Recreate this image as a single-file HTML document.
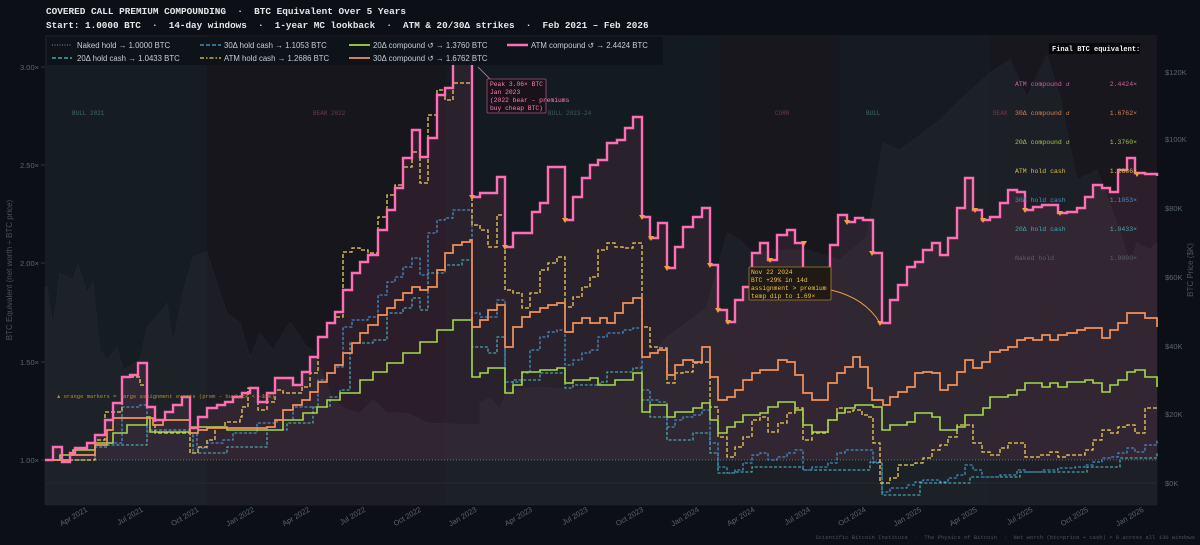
<!DOCTYPE html>
<html><head><meta charset="utf-8">
<style>
html,body{margin:0;padding:0;background:#0c1016;width:1200px;height:545px;overflow:hidden}
svg{display:block}
.m{font-family:"Liberation Mono",monospace}
.s{font-family:"Liberation Sans","DejaVu Sans",sans-serif}
</style></head><body>
<svg width="1200" height="545" viewBox="0 0 1200 545" xmlns="http://www.w3.org/2000/svg">
<rect width="1200" height="545" fill="#0c1016"/>
<text x="46" y="14" class="m" font-size="9.4" font-weight="bold" fill="#e6e6e6" xml:space="preserve">COVERED CALL PREMIUM COMPOUNDING  ·  BTC Equivalent Over 5 Years</text>
<text x="46" y="28" class="m" font-size="9.3" font-weight="bold" fill="#e6e6e6" xml:space="preserve">Start: 1.0000 BTC  ·  14-day windows  ·  1-year MC lookback  ·  ATM &amp; 20/30Δ strikes  ·  Feb 2021 – Feb 2026</text>
<rect x="45" y="35" width="1112" height="470" fill="#151a21"/>
<rect x="45" y="35" width="162" height="470" fill="#161d22"/>
<rect x="207" y="35" width="238" height="470" fill="#17161d"/>
<rect x="445" y="35" width="275" height="470" fill="#141b20"/>
<rect x="720" y="35" width="120" height="470" fill="#18171e"/>
<rect x="840" y="35" width="150" height="470" fill="#151b21"/>
<rect x="990" y="35" width="167" height="470" fill="#18171e"/>
<path d="M45 505 L45 287 L47 287 L53 327 L60 273 L73 280 L78 265 L87 293 L93 283 L100 350 L107 360 L117 347 L123 370 L140 360 L147 327 L160 313 L167 303 L173 343 L183 293 L193 257 L207 252 L220 293 L227 313 L240 323 L250 357 L260 333 L273 350 L290 322 L307 347 L313 350 L333 400 L347 410 L360 413 L373 400 L387 413 L407 413 L427 423 L480 425 L480 403 L490 398 L500 410 L507 390 L540 387 L573 390 L607 385 L633 382 L640 360 L653 353 L667 337 L687 323 L707 307 L727 233 L740 240 L753 253 L773 250 L807 250 L840 260 L867 237 L877 177 L883 143 L900 150 L940 120 L960 100 L990 73 L1010 60 L1027 97 L1047 55 L1060 97 L1077 180 L1097 170 L1117 223 L1130 263 L1137 243 L1150 250 L1157 243 L1157 505 Z" fill="#262b32" opacity="0.4" stroke="#2e333b" stroke-width="0.8"/>
<path d="M45 460 H53 V447 H62 V462 H70 V453 H75 V448 H87 V443 H95 V435 H105 V420 H113 V403 H122 V377 H130 V375 H138 V363 H147 V407 H155 V420 H165 V412 H173 V405 H182 V397 H190 V428 H198 V417 H207 V408 H217 V405 H225 V402 H233 V397 H242 V393 H250 V388 H258 V402 H267 V393 H275 V378 H293 V385 H302 V372 H310 V357 H318 V337 H327 V323 H335 V312 H343 V290 H352 V273 H360 V262 H368 V255 H378 V230 H387 V210 H395 V188 H403 V158 H412 V130 H420 V157 H428 V138 H437 V95 H445 V88 H453 V60 H462 V55 H472 V197 H480 V193 H497 V177 H505 V247 H513 V233 H532 V212 H540 V203 H548 V167 H557 V167 H565 V220 H573 V197 H582 V178 H590 V165 H598 V160 H607 V143 H617 V140 H625 V128 H633 V117 H642 V217 H650 V238 H658 V223 H667 V268 H675 V247 H683 V227 H693 V217 H702 V208 H710 V265 H718 V310 H727 V322 H735 V300 H743 V287 H752 V253 H760 V243 H768 V260 H777 V235 H787 V230 H795 V243 H803 V287 H820 V277 H830 V245 H838 V215 H847 V222 H855 V218 H863 V220 H873 V253 H882 V323 H890 V300 H898 V285 H907 V267 H915 V262 H923 V250 H932 V243 H940 V255 H948 V238 H957 V208 H965 V178 H973 V210 H982 V220 H990 V217 H1000 V203 H1008 V190 H1017 V192 H1025 V210 H1033 V207 H1042 V205 H1050 V205 H1058 V213 H1067 V212 H1077 V208 H1085 V197 H1093 V185 H1102 V188 H1110 V192 H1118 V170 H1127 V158 H1135 V173 H1145 V174 H1157 V176 V460 H45 Z" fill="#ff6eb4" opacity="0.09"/>
<line x1="45" y1="460" x2="1157" y2="460" stroke="#7a8290" stroke-width="0.8" stroke-dasharray="1,2"/>
<line x1="45" y1="483" x2="1157" y2="483" stroke="#2a2f38" stroke-width="0.8"/>
<g class="m" font-size="6">
<text x="72" y="115" fill="#3f6a62">BULL 2021</text>
<text x="313" y="115" fill="#6a3a48">BEAR 2022</text>
<text x="548" y="115" fill="#3f5a58">BULL 2023-24</text>
<text x="775" y="115" fill="#6a3a48">CORR</text>
<text x="866" y="115" fill="#3f6a62">BULL</text>
<text x="993" y="115" fill="#6a3a48">BEAR</text>
</g>
<g fill="none" stroke-linejoin="miter">
<path stroke="#4fc1c9" stroke-width="1.1" stroke-dasharray="3,1.8" d="M45 460 H95 V447 H107 V445 H147 V430 H190 V435 H193 V453 H227 V447 H267 V430 H287 V423 H313 V407 H330 V397 H340 V390 H350 V343 H373 V340 H387 V313 H403 V308 H412 V298 H420 V310 H428 V273 H445 V265 H462 V260 H472 V262 V347 H488 V353 H497 V337 H505 V393 H513 V380 H540 V373 H565 V388 H573 V385 H600 V382 H607 V372 H633 V368 H642 V400 H650 V417 H667 V440 H693 V433 H710 V453 H718 V473 H735 V472 H752 V467 H803 V470 H870 V462 H882 V495 H920 V483 H970 V477 H1020 V472 H1087 V467 H1120 V458 H1157 V452"/>
<path stroke="#4aa3e6" stroke-width="1.1" stroke-dasharray="3,1.8" d="M45 460 H95 V445 H107 V443 H122 V407 H140 V405 H147 V432 H190 V433 H197 V448 H207 V443 H223 V440 H233 V433 H257 V423 H277 V420 H293 V407 H318 V380 H327 V373 H335 V367 H343 V327 H352 V320 H368 V317 H378 V295 H387 V282 H395 V277 H403 V267 H412 V258 H420 V275 H428 V233 H437 V220 H445 V218 H453 V210 H472 V313 H480 V317 H497 V300 H505 V382 H522 V373 H530 V350 H540 V337 H548 V332 H557 V330 H565 V365 H573 V360 H582 V353 H590 V350 H598 V337 H607 V333 H623 V330 H633 V328 H642 V390 H650 V400 H658 V402 H667 V427 H675 V420 H683 V417 H693 V415 H702 V410 H710 V443 H718 V467 H727 V473 H735 V470 H743 V463 H752 V455 H760 V453 H768 V460 H777 V457 H787 V453 H795 V450 H803 V470 H812 V467 H828 V463 H837 V453 H845 V450 H873 V463 H882 V492 H890 V488 H907 V485 H915 V482 H923 V480 H940 V482 H948 V478 H957 V475 H965 V465 H973 V470 H982 V477 H1000 V475 H1017 V470 H1025 V472 H1042 V470 H1058 V468 H1075 V467 H1085 V465 H1093 V462 H1102 V458 H1110 V457 H1118 V453 H1127 V448 H1135 V452 H1145 V445 H1157 V440"/>
<path stroke="#f2cc5a" stroke-width="1.3" stroke-dasharray="4,2" d="M45 460 H95 V440 H105 V412 H122 V377 H140 V385 H147 V407 H155 V433 H190 V453 H198 V447 H207 V440 H215 V427 H225 V422 H240 V417 H242 V407 H248 V388 H258 V410 H267 V402 H275 V390 H283 V393 H302 V387 H310 V373 H318 V337 H327 V323 H335 V317 H343 V252 H352 V248 H360 V250 H368 V253 H378 V217 H387 V195 H395 V185 H403 V167 H412 V152 H420 V183 H428 V115 H437 V90 H445 V100 H453 V83 H472 V85 V225 H480 V230 H488 V247 H497 V215 H505 V290 H513 V293 H522 V308 H530 V293 H540 V270 H548 V263 H557 V257 H565 V307 H573 V297 H582 V287 H590 V277 H598 V250 H607 V243 H615 V247 H623 V248 H633 V243 H642 V327 H650 V347 H658 V348 H667 V383 H675 V373 H683 V372 H693 V363 H702 V362 H710 V407 H718 V437 H727 V457 H735 V447 H743 V437 H752 V420 H760 V417 H768 V432 H778 V423 H787 V413 H795 V408 H803 V440 H812 V433 H828 V420 H837 V408 H845 V412 H853 V410 H862 V415 H868 V417 H873 V443 H880 V483 H890 V478 H898 V465 H915 V463 H923 V458 H932 V450 H940 V445 H948 V437 H957 V425 H965 V425 H973 V443 H982 V452 H990 V455 H1000 V448 H1008 V443 H1025 V457 H1040 V455 H1050 V452 H1058 V457 H1067 V455 H1085 V450 H1093 V440 H1102 V430 H1110 V433 H1118 V427 H1127 V425 H1135 V433 H1145 V408 H1157 V408"/>
<path stroke="#a6d94a" stroke-width="1.6" d="M45 460 H60 V455 H73 V450 H95 V443 H113 V433 H127 V425 H147 V417 H150 V432 H190 V427 H227 V430 H270 V430 H283 V420 H303 V413 H317 V407 H327 V400 H340 V393 H360 V380 H373 V372 H387 V363 H403 V353 H420 V342 H437 V330 H453 V320 H472 V317 V377 H480 V373 H488 V368 H505 V393 H513 V385 H522 V372 H540 V370 H557 V368 H565 V383 H573 V380 H590 V378 H598 V385 H615 V380 H633 V373 H642 V412 H650 V405 H667 V417 H675 V412 H693 V408 H702 V403 H710 V420 H718 V433 H727 V427 H735 V422 H743 V415 H760 V413 H768 V407 H778 V402 H795 V410 H803 V425 H812 V432 H828 V420 H837 V413 H845 V408 H855 V405 H873 V407 H882 V430 H890 V425 H907 V422 H915 V413 H932 V417 H940 V430 H957 V427 H965 V415 H983 V408 H990 V397 H1008 V395 H1017 V390 H1025 V383 H1042 V387 H1050 V383 H1058 V387 H1067 V382 H1085 V380 H1093 V383 H1102 V392 H1110 V385 H1118 V380 H1127 V372 H1135 V370 H1145 V377 H1157 V387"/>
<path stroke="#f4925a" stroke-width="1.7" d="M45 460 H70 V455 H95 V445 H107 V430 H113 V418 H147 V418 H153 V425 H163 V420 H190 V433 H198 V430 H207 V428 H267 V427 H275 V420 H283 V410 H293 V405 H302 V400 H310 V392 H318 V382 H327 V373 H335 V365 H343 V353 H352 V343 H360 V333 H368 V325 H378 V315 H387 V308 H395 V300 H403 V293 H412 V287 H420 V290 H428 V287 H437 V270 H445 V253 H453 V245 H462 V242 H470 V240 H472 V327 H480 V320 H488 V310 H497 V305 H505 V347 H513 V327 H522 V317 H530 V312 H540 V308 H548 V305 H557 V303 H565 V332 H573 V323 H582 V318 H590 V323 H600 V318 H607 V323 H615 V313 H623 V303 H633 V298 H642 V357 H650 V353 H658 V350 H667 V375 H675 V365 H683 V360 H693 V362 H702 V347 H710 V377 H718 V400 H727 V397 H735 V390 H743 V380 H752 V373 H760 V370 H778 V360 H787 V362 H795 V375 H803 V393 H812 V400 H828 V383 H837 V373 H845 V367 H853 V357 H860 V367 H868 V388 H872 V400 H883 V405 H890 V397 H898 V392 H907 V387 H915 V373 H923 V372 H932 V373 H940 V390 H948 V385 H957 V372 H965 V360 H973 V368 H982 V362 H990 V352 H1000 V350 H1008 V347 H1017 V340 H1025 V338 H1033 V340 H1042 V335 H1050 V340 H1058 V335 H1067 V333 H1077 V330 H1085 V328 H1093 V328 H1102 V338 H1110 V330 H1118 V323 H1127 V313 H1135 V313 H1145 V318 H1157 V327"/>
<path stroke="#ff6eb4" stroke-width="2.4" d="M45 460 H53 V447 H62 V462 H70 V453 H75 V448 H87 V443 H95 V435 H105 V420 H113 V403 H122 V377 H130 V375 H138 V363 H147 V407 H155 V420 H165 V412 H173 V405 H182 V397 H190 V428 H198 V417 H207 V408 H217 V405 H225 V402 H233 V397 H242 V393 H250 V388 H258 V402 H267 V393 H275 V378 H293 V385 H302 V372 H310 V357 H318 V337 H327 V323 H335 V312 H343 V290 H352 V273 H360 V262 H368 V255 H378 V230 H387 V210 H395 V188 H403 V158 H412 V130 H420 V157 H428 V138 H437 V95 H445 V88 H453 V60 H462 V55 H472 V197 H480 V193 H497 V177 H505 V247 H513 V233 H532 V212 H540 V203 H548 V167 H557 V167 H565 V220 H573 V197 H582 V178 H590 V165 H598 V160 H607 V143 H617 V140 H625 V128 H633 V117 H642 V217 H650 V238 H658 V223 H667 V268 H675 V247 H683 V227 H693 V217 H702 V208 H710 V265 H718 V310 H727 V322 H735 V300 H743 V287 H752 V253 H760 V243 H768 V260 H777 V235 H787 V230 H795 V243 H803 V287 H820 V277 H830 V245 H838 V215 H847 V222 H855 V218 H863 V220 H873 V253 H882 V323 H890 V300 H898 V285 H907 V267 H915 V262 H923 V250 H932 V243 H940 V255 H948 V238 H957 V208 H965 V178 H973 V210 H982 V220 H990 V217 H1000 V203 H1008 V190 H1017 V192 H1025 V210 H1033 V207 H1042 V205 H1050 V205 H1058 V213 H1067 V212 H1077 V208 H1085 V197 H1093 V185 H1102 V188 H1110 V192 H1118 V170 H1127 V158 H1135 V173 H1145 V174 H1157 V176"/>
</g>
<g fill="#f0a040">
<path d="M469 195h6l-3 5z"/><path d="M502 245h6l-3 5z"/><path d="M562 218h6l-3 5z"/><path d="M639 215h6l-3 5z"/><path d="M648 236h6l-3 5z"/><path d="M664 266h6l-3 5z"/><path d="M707 263h6l-3 5z"/><path d="M715 308h6l-3 5z"/><path d="M725 320h6l-3 5z"/><path d="M767 258h6l-3 5z"/><path d="M801 241h6l-3 5z"/><path d="M844 220h6l-3 5z"/><path d="M869 251h6l-3 5z"/><path d="M877 321h6l-3 5z"/><path d="M972 208h6l-3 5z"/><path d="M980 218h6l-3 5z"/><path d="M1022 208h6l-3 5z"/><path d="M1057 211h6l-3 5z"/><path d="M1134 172h6l-3 5z"/>
</g>
<path d="M478 67 L491 80" stroke="#ff6eb4" stroke-width="0.8"/>
<rect x="487" y="79" width="59" height="34" fill="#1a1119" stroke="#a8507e" stroke-width="0.8" rx="1"/>
<g class="m" font-size="6.3" fill="#ff7fbf"><text x="490" y="86">Peak  3.06× BTC</text><text x="490" y="94">Jan 2023</text><text x="490" y="102">(2022 bear – premiums</text><text x="490" y="110">buy cheap BTC)</text></g>
<path d="M831 290 Q865 298 880 323" stroke="#f0a040" stroke-width="0.9" fill="none"/>
<rect x="749" y="267" width="82" height="33" fill="#1f1a14" stroke="#a8802e" stroke-width="0.8" rx="1"/>
<g class="m" font-size="6.3" fill="#f2c14e"><text x="751" y="274">Nov 22 2024</text><text x="751" y="282">BTC +29% in 14d</text><text x="751" y="290">assignment &gt; premium</text><text x="751" y="298">temp dip to 1.69×</text></g>
<text x="57" y="398" class="m" font-size="5.5" fill="#b98a2e">▲ orange markers = large assignment events (prem – buyback &lt; −$5K)</text>
<rect x="47" y="37" width="616" height="28" fill="#0e1319" opacity="0.95" rx="1"/>
<g class="s" font-size="7.8" fill="#c9ccd2" xml:space="preserve">
<line x1="52" y1="45" x2="72" y2="45" stroke="#8a929e" stroke-dasharray="1,1.5"/><text x="77" y="48">Naked hold  →  1.0000 BTC</text>
<line x1="200" y1="45" x2="221" y2="45" stroke="#4aa3e6" stroke-width="1.3" stroke-dasharray="4,2"/><text x="224" y="48">30Δ  hold cash  →  1.1053 BTC</text>
<line x1="349" y1="45" x2="370" y2="45" stroke="#a6d94a" stroke-width="1.8"/><text x="373" y="48">20Δ  compound ↺  →  1.3760 BTC</text>
<line x1="507" y1="45" x2="528" y2="45" stroke="#ff6eb4" stroke-width="2.6"/><text x="531" y="48">ATM  compound ↺  →  2.4424 BTC</text>
<line x1="52" y1="58" x2="72" y2="58" stroke="#4fc1c9" stroke-width="1.3" stroke-dasharray="4,2"/><text x="77" y="61">20Δ  hold cash  →  1.0433 BTC</text>
<line x1="200" y1="58" x2="221" y2="58" stroke="#f2cc5a" stroke-width="1.3" stroke-dasharray="4,2,1.5,2"/><text x="224" y="61">ATM  hold cash  →  1.2686 BTC</text>
<line x1="349" y1="58" x2="370" y2="58" stroke="#f4925a" stroke-width="1.8"/><text x="373" y="61">30Δ  compound ↺  →  1.6762 BTC</text>
</g>
<rect x="1049" y="43" width="91" height="11" fill="#05070a"/>
<text x="1052" y="51" class="m" font-size="7" font-weight="bold" fill="#f0f0f0">Final BTC equivalent:</text>
<g class="m" font-size="6.5" xml:space="preserve">
<text x="1015" y="86" fill="#d0609a">ATM  compound ↺</text><text x="1137" y="86" text-anchor="end" fill="#d0609a">2.4424×</text>
<text x="1015" y="115" fill="#d98050">30Δ  compound ↺</text><text x="1137" y="115" text-anchor="end" fill="#d98050">1.6762×</text>
<text x="1015" y="144" fill="#a0c24a">20Δ  compound ↺</text><text x="1137" y="144" text-anchor="end" fill="#a0c24a">1.3760×</text>
<text x="1015" y="173" fill="#d8bb52">ATM  hold cash</text><text x="1137" y="173" text-anchor="end" fill="#d8bb52">1.2686×</text>
<text x="1015" y="202" fill="#4a8ec8">30Δ  hold cash</text><text x="1137" y="202" text-anchor="end" fill="#4a8ec8">1.1053×</text>
<text x="1015" y="231" fill="#44a8b0">20Δ  hold cash</text><text x="1137" y="231" text-anchor="end" fill="#44a8b0">1.0433×</text>
<text x="1015" y="260" fill="#5a606a">Naked hold</text><text x="1137" y="260" text-anchor="end" fill="#5a606a">1.0000×</text>
</g>
<g class="s" font-size="7.5" fill="#5c6470" text-anchor="end">
<text x="39" y="70">3.00×</text><text x="39" y="168">2.50×</text><text x="39" y="266">2.00×</text><text x="39" y="365">1.50×</text><text x="39" y="463">1.00×</text>
</g>
<g stroke="#3a404a" stroke-width="0.8"><line x1="41" y1="67" x2="45" y2="67"/><line x1="41" y1="165" x2="45" y2="165"/><line x1="41" y1="263" x2="45" y2="263"/><line x1="41" y1="362" x2="45" y2="362"/><line x1="41" y1="460" x2="45" y2="460"/></g>
<g class="s" font-size="7.5" fill="#5c6470">
<text x="1165" y="75">$120K</text><text x="1165" y="142">$100K</text><text x="1165" y="211">$80K</text><text x="1165" y="280">$60K</text><text x="1165" y="349">$40K</text><text x="1165" y="417">$20K</text><text x="1165" y="486">$0K</text>
</g>
<text transform="translate(12,270) rotate(-90)" text-anchor="middle" class="s" font-size="8" fill="#4a515c">BTC Equivalent  (net worth ÷ BTC price)</text>
<text transform="translate(1193,270) rotate(-90)" text-anchor="middle" class="s" font-size="8" fill="#4a515c">BTC Price ($K)</text>
<g class="s" font-size="7.5" fill="#5c6470" text-anchor="end">
<text transform="translate(88,511) rotate(-30)">Apr 2021</text>
<text transform="translate(143.6,511) rotate(-30)">Jul 2021</text>
<text transform="translate(199.2,511) rotate(-30)">Oct 2021</text>
<text transform="translate(254.8,511) rotate(-30)">Jan 2022</text>
<text transform="translate(310.4,511) rotate(-30)">Apr 2022</text>
<text transform="translate(366,511) rotate(-30)">Jul 2022</text>
<text transform="translate(421.6,511) rotate(-30)">Oct 2022</text>
<text transform="translate(477.2,511) rotate(-30)">Jan 2023</text>
<text transform="translate(532.8,511) rotate(-30)">Apr 2023</text>
<text transform="translate(588.4,511) rotate(-30)">Jul 2023</text>
<text transform="translate(644,511) rotate(-30)">Oct 2023</text>
<text transform="translate(699.6,511) rotate(-30)">Jan 2024</text>
<text transform="translate(755.2,511) rotate(-30)">Apr 2024</text>
<text transform="translate(810.8,511) rotate(-30)">Jul 2024</text>
<text transform="translate(866.4,511) rotate(-30)">Oct 2024</text>
<text transform="translate(922,511) rotate(-30)">Jan 2025</text>
<text transform="translate(977.6,511) rotate(-30)">Apr 2025</text>
<text transform="translate(1033.2,511) rotate(-30)">Jul 2025</text>
<text transform="translate(1088.8,511) rotate(-30)">Oct 2025</text>
<text transform="translate(1144.4,511) rotate(-30)">Jan 2026</text>
</g>
<text x="1195" y="539" text-anchor="end" class="m" font-size="5.5" fill="#4a515c" xml:space="preserve">Scientific Bitcoin Institute  ·  The Physics of Bitcoin  ·  Net worth (btc×price + cash) &gt; 0 across all 130 windows</text>
</svg>
</body></html>
